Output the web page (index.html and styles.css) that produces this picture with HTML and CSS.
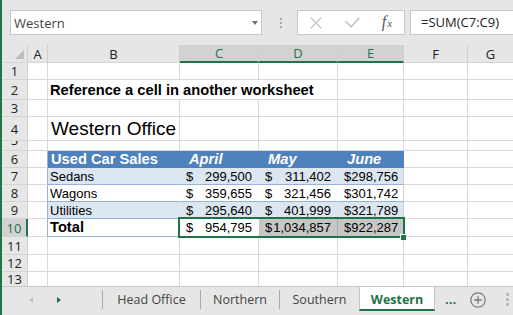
FILE: index.html
```html
<!DOCTYPE html>
<html>
<head>
<meta charset="utf-8">
<title>Western</title>
<link rel="stylesheet" href="styles.css">
</head>
<body>
<div class="app">
  <div class="fbar">
    <div class="namebox"><span>Western</span><span class="dd"></span></div>
    <div class="grip"><i></i><i></i><i></i></div>
    <div class="btns">
      <span class="btn btn-wide"><svg width="12" height="12" viewBox="0 0 12 12"><path d="M0.8 0.8L11.2 11.2M11.2 0.8L0.8 11.2" stroke="#c4c4c4" stroke-width="1.3" fill="none"/></svg></span>
      <span class="btn btn-wide"><svg width="15" height="11" viewBox="0 0 15 11"><path d="M0.6 4.2L6.2 9.8L14.4 0.8" stroke="#c4c4c4" stroke-width="1.5" fill="none"/></svg></span>
      <span class="btn fx"><span class="fx-f">f</span><span class="fx-x">x</span></span>
    </div>
    <div class="formula">=SUM(C7:C9)</div>
  </div>

  <div class="sheet">
    <div class="row hdr">
      <div class="corner"></div>
      <div class="ch">A</div><div class="ch">B</div><div class="ch sel">C</div><div class="ch sel">D</div><div class="ch sel">E</div><div class="ch">F</div><div class="ch last">G</div>
    </div>

    <div class="row">
      <div class="rh">1</div>
      <div class="c"></div><div class="c"></div><div class="c"></div><div class="c"></div><div class="c"></div><div class="c"></div><div class="c last"></div>
    </div>

    <div class="row h20">
      <div class="rh">2</div>
      <div class="c"></div><div class="c bold span3 pb1">Reference a cell in another worksheet</div><div class="c"></div><div class="c"></div><div class="c last"></div>
    </div>

    <div class="row">
      <div class="rh">3</div>
      <div class="c"></div><div class="c"></div><div class="c"></div><div class="c"></div><div class="c"></div><div class="c"></div><div class="c last"></div>
    </div>

    <div class="row h24">
      <div class="rh">4</div>
      <div class="c"></div><div class="c title">Western Office</div><div class="c"></div><div class="c"></div><div class="c"></div><div class="c"></div><div class="c last"></div>
    </div>

    <div class="row h10">
      <div class="rh short"><span>5</span></div>
      <div class="c"></div><div class="c"></div><div class="c"></div><div class="c"></div><div class="c"></div><div class="c"></div><div class="c last"></div>
    </div>

    <div class="row">
      <div class="rh">6</div>
      <div class="c edge"></div>
      <div class="c tb-head first">Used Car Sales</div>
      <div class="c tb-head month">April</div>
      <div class="c tb-head month">May</div>
      <div class="c tb-head month">June</div>
      <div class="c"></div><div class="c last"></div>
    </div>

    <div class="row">
      <div class="rh">7</div>
      <div class="c edge"></div>
      <div class="c band">Sedans</div>
      <div class="c band acct"><span>$</span><span>299,500</span></div>
      <div class="c band acct"><span>$</span><span>311,402</span></div>
      <div class="c band acct end"><span>$</span><span>298,756</span></div>
      <div class="c"></div><div class="c last"></div>
    </div>

    <div class="row">
      <div class="rh">8</div>
      <div class="c edge"></div>
      <div class="c plain">Wagons</div>
      <div class="c plain acct"><span>$</span><span>359,655</span></div>
      <div class="c plain acct"><span>$</span><span>321,456</span></div>
      <div class="c plain acct end"><span>$</span><span>301,742</span></div>
      <div class="c"></div><div class="c last"></div>
    </div>

    <div class="row">
      <div class="rh">9</div>
      <div class="c edge"></div>
      <div class="c band">Utilities</div>
      <div class="c band acct"><span>$</span><span>295,640</span></div>
      <div class="c band acct"><span>$</span><span>401,999</span></div>
      <div class="c band acct end"><span>$</span><span>321,789</span></div>
      <div class="c"></div><div class="c last"></div>
    </div>

    <div class="row h18 total">
      <div class="rh sel">10</div>
      <div class="c edge"></div>
      <div class="c plain bold">Total</div>
      <div class="c plain acct"><span>$</span><span>954,795</span></div>
      <div class="c gray acct"><span>$</span><span>1,034,857</span></div>
      <div class="c gray acct end"><span>$</span><span>922,287</span></div>
      <div class="c"></div><div class="c last"></div>
    </div>

    <div class="row h18">
      <div class="rh">11</div>
      <div class="c"></div><div class="c"></div><div class="c"></div><div class="c"></div><div class="c"></div><div class="c"></div><div class="c last"></div>
    </div>

    <div class="row">
      <div class="rh">12</div>
      <div class="c"></div><div class="c"></div><div class="c"></div><div class="c"></div><div class="c"></div><div class="c"></div><div class="c last"></div>
    </div>

    <div class="row h14 bottom">
      <div class="rh">13</div>
      <div class="c"></div><div class="c"></div><div class="c"></div><div class="c"></div><div class="c"></div><div class="c"></div><div class="c last"></div>
    </div>

    <div class="selection"></div>
    <div class="handle"></div>
  </div>

  <div class="tabs">
    <div class="nav"><span class="arr-l"></span><span class="arr-r"></span></div>
    <span class="sep"></span>
    <div class="tab tab-head">Head Office</div>
    <span class="sep"></span>
    <div class="tab tab-north">Northern</div>
    <span class="sep"></span>
    <div class="tab tab-south">Southern</div>
    <div class="tab active">Western</div>
    <div class="more">...</div>
    <div class="add"><svg width="16" height="16" viewBox="0 0 16 16"><circle cx="8" cy="8" r="7.2" fill="none" stroke="#7a7a7a" stroke-width="1.2"/><path d="M8 4.3V11.7M4.3 8H11.7" stroke="#7a7a7a" stroke-width="1.3"/></svg></div>
    <div class="grip grip-tabs"><i></i><i></i><i></i></div>
  </div>
</div>
</body>
</html>
```

FILE: styles.css
```css
* { box-sizing: border-box; }
html, body { margin: 0; padding: 0; }
body { width: 513px; height: 315px; overflow: hidden; background: #e6e6e6; }

.app {
  width: 513px;
  height: 315px;
  border-left: 2px solid #217346;
  background: #e6e6e6;
  display: flex;
  flex-direction: column;
  overflow: hidden;
  font-family: "Open Sans", "DejaVu Sans", sans-serif;
}

/* ---------- formula bar ---------- */
.fbar {
  flex: none;
  height: 45px;
  display: flex;
  align-items: flex-start;
  padding: 10px 0 0 8px;
}
.namebox {
  flex: none;
  width: 252px;
  height: 25px;
  background: #fff;
  border: 1px solid #c8c8c8;
  display: flex;
  align-items: center;
  justify-content: space-between;
  padding: 0 3px 0 3px;
  font-size: 13px;
  color: #444;
}
.dd {
  width: 0;
  height: 0;
  border-left: 3.5px solid transparent;
  border-right: 3.5px solid transparent;
  border-top: 4px solid #707070;
}
.grip {
  flex: none;
  display: flex;
  flex-direction: column;
  gap: 2px;
  margin: 8px 0 0 18px;
}
.grip i {
  display: block;
  width: 2px;
  height: 2px;
  background: #a6a6a6;
}
.btns {
  flex: none;
  width: 108px;
  height: 25px;
  margin-left: 15px;
  background: #fff;
  border: 1px solid #c8c8c8;
  display: flex;
  align-items: center;
}
.btn {
  width: 34px;
  height: 23px;
  display: flex;
  align-items: center;
  justify-content: center;
}
.btn-wide { width: 36px; }
.btn svg { display: block; }
.fx {
  font-family: "Liberation Serif", "DejaVu Serif", serif;
  font-style: italic;
  color: #555;
  align-items: baseline;
  padding-top: 2px;
}
.fx-f { font-size: 16px; }
.fx-x { font-size: 11px; margin-left: 1px; }
.formula {
  flex: 1;
  height: 25px;
  margin-left: 5px;
  background: #fff;
  border: 1px solid #c8c8c8;
  border-right: none;
  padding-left: 10px;
  font-size: 13px;
  line-height: 23px;
  color: #222;
  white-space: nowrap;
}

/* ---------- sheet grid ---------- */
.sheet {
  flex: none;
  height: 241px;
  position: relative;
  background: #fff;
}
.row {
  display: grid;
  grid-template-columns: 26px 20px 132px 79px 79px 66px 64px 1fr;
  height: 17px;
}
.row.hdr { height: 18px; }
.row.h20 { height: 20px; }
.row.h24 { height: 24px; }
.row.h10 { height: 10px; }
.row.h18 { height: 18px; }
.row.h14 { height: 14px; }

.corner, .ch, .rh {
  background: #e6e6e6;
  border-right: 1px solid #cfcfcf;
  border-bottom: 1px solid #d4d4d4;
  display: flex;
  align-items: center;
  justify-content: center;
  font-family: "Open Sans", "DejaVu Sans", sans-serif;
  font-size: 13px;
  line-height: 16px;
  color: #222;
  overflow: hidden;
}
.corner {
  justify-content: flex-end;
  align-items: flex-end;
  padding: 0 3px 3px 0;
}
.corner::after {
  content: "";
  width: 0;
  height: 0;
  border-left: 9px solid transparent;
  border-bottom: 9px solid #bcbcbc;
}
.ch.last { border-right: none; }
.ch.sel {
  background: #d2d2d2;
  color: #217346;
  border-bottom: 2px solid #217346;
}
.rh.sel {
  background: #d2d2d2;
  color: #217346;
  border-right: 2px solid #217346;
}
/* row 5 is shorter than its number: only the lower part of the digit shows */
.rh.short { align-items: flex-start; }
.rh.short span { margin-top: -9px; }
.row.h14 .rh { line-height: 13px; }
.bottom .rh, .bottom .c { border-bottom: none; }

.c {
  border-right: 1px solid #d9d9d9;
  border-bottom: 1px solid #d9d9d9;
  display: flex;
  align-items: flex-end;
  padding: 0 2px;
  font-family: "Liberation Sans", Arial, sans-serif;
  font-size: 13px;
  line-height: 15px;
  color: #000;
  white-space: nowrap;
  min-width: 0;
}
.c.last { border-right: none; }
.span3 { grid-column: span 3; }
.pb1 { padding-bottom: 1px; }
.bold {
  font-weight: bold;
  font-size: 14.7px;
  line-height: 16px;
}
.title {
  font-size: 19px;
  line-height: 22px;
  padding-left: 3px;
}

/* table */
.edge { border-right-color: #95b3d7; }
.tb-head {
  background: #4f81bd;
  border-right-color: #4f81bd;
  border-bottom-color: #4f81bd;
  color: #fff;
  font-weight: bold;
  font-size: 14.7px;
  line-height: 16px;
}
.tb-head.first { padding-left: 3px; }
.tb-head.month { font-style: italic; padding-left: 9px; }
.band {
  background: #dce6f1;
  border-right-color: #dce6f1;
  border-bottom-color: #95b3d7;
}
.plain {
  background: #fff;
  border-right-color: #fff;
  border-bottom-color: #95b3d7;
}
.gray {
  background: #c6c6c6;
  border-right-color: #ababab;
  border-bottom-color: #95b3d7;
}
.end { border-right-color: #d0d0d0; }
.acct {
  justify-content: space-between;
  padding: 0 6px;
}
.total .c { padding-bottom: 1px; }

.selection {
  position: absolute;
  left: 176px;
  top: 172px;
  width: 227px;
  height: 21px;
  border: 2px solid #217346;
  pointer-events: none;
}
.handle {
  position: absolute;
  left: 398px;
  top: 189px;
  width: 6px;
  height: 6px;
  background: #217346;
  border-top: 1px solid #fff;
  border-left: 1px solid #fff;
}

/* ---------- sheet tabs ---------- */
.tabs {
  flex: none;
  height: 29px;
  border-top: 1px solid #c6c6c6;
  display: flex;
  align-items: flex-start;
  font-family: "Open Sans", "DejaVu Sans", sans-serif;
  font-size: 12.5px;
  color: #444;
}
.nav {
  flex: none;
  width: 100px;
  height: 22px;
  display: flex;
  align-items: center;
  padding-top: 3px;
}
.arr-l {
  margin-left: 27px;
  width: 0;
  height: 0;
  border-top: 3.5px solid transparent;
  border-bottom: 3.5px solid transparent;
  border-right: 4px solid #c2c2c2;
}
.arr-r {
  margin-left: 24px;
  width: 0;
  height: 0;
  border-top: 3.5px solid transparent;
  border-bottom: 3.5px solid transparent;
  border-left: 4.5px solid #1e6b41;
}
.sep {
  flex: none;
  width: 1px;
  height: 19px;
  margin-top: 3px;
  background: #a8a8a8;
}
.tab {
  flex: none;
  height: 22px;
  display: flex;
  align-items: center;
  justify-content: center;
  padding-top: 2px;
  white-space: nowrap;
}
.tab-head { width: 97px; }
.tab-north { width: 78px; }
.tab-south { width: 79px; }
.tab.active {
  width: 76px;
  height: 24px;
  background: #fff;
  border-left: 1px solid #c6c6c6;
  border-right: 1px solid #c6c6c6;
  border-bottom: 2px solid #217346;
  color: #217346;
  font-weight: bold;
}
.more {
  flex: none;
  height: 22px;
  margin-left: 10px;
  display: flex;
  align-items: center;
  padding-top: 2px;
  color: #217346;
  font-weight: bold;
  font-size: 13px;
}
.add {
  flex: none;
  margin: 5px 0 0 14px;
  width: 16px;
  height: 16px;
}
.add svg { display: block; }
.grip-tabs {
  margin: 6px 0 0 20px;
  gap: 2.5px;
}
.grip-tabs i {
  width: 2.5px;
  height: 2.5px;
  border-radius: 50%;
  background: #b5b5b5;
}
```
